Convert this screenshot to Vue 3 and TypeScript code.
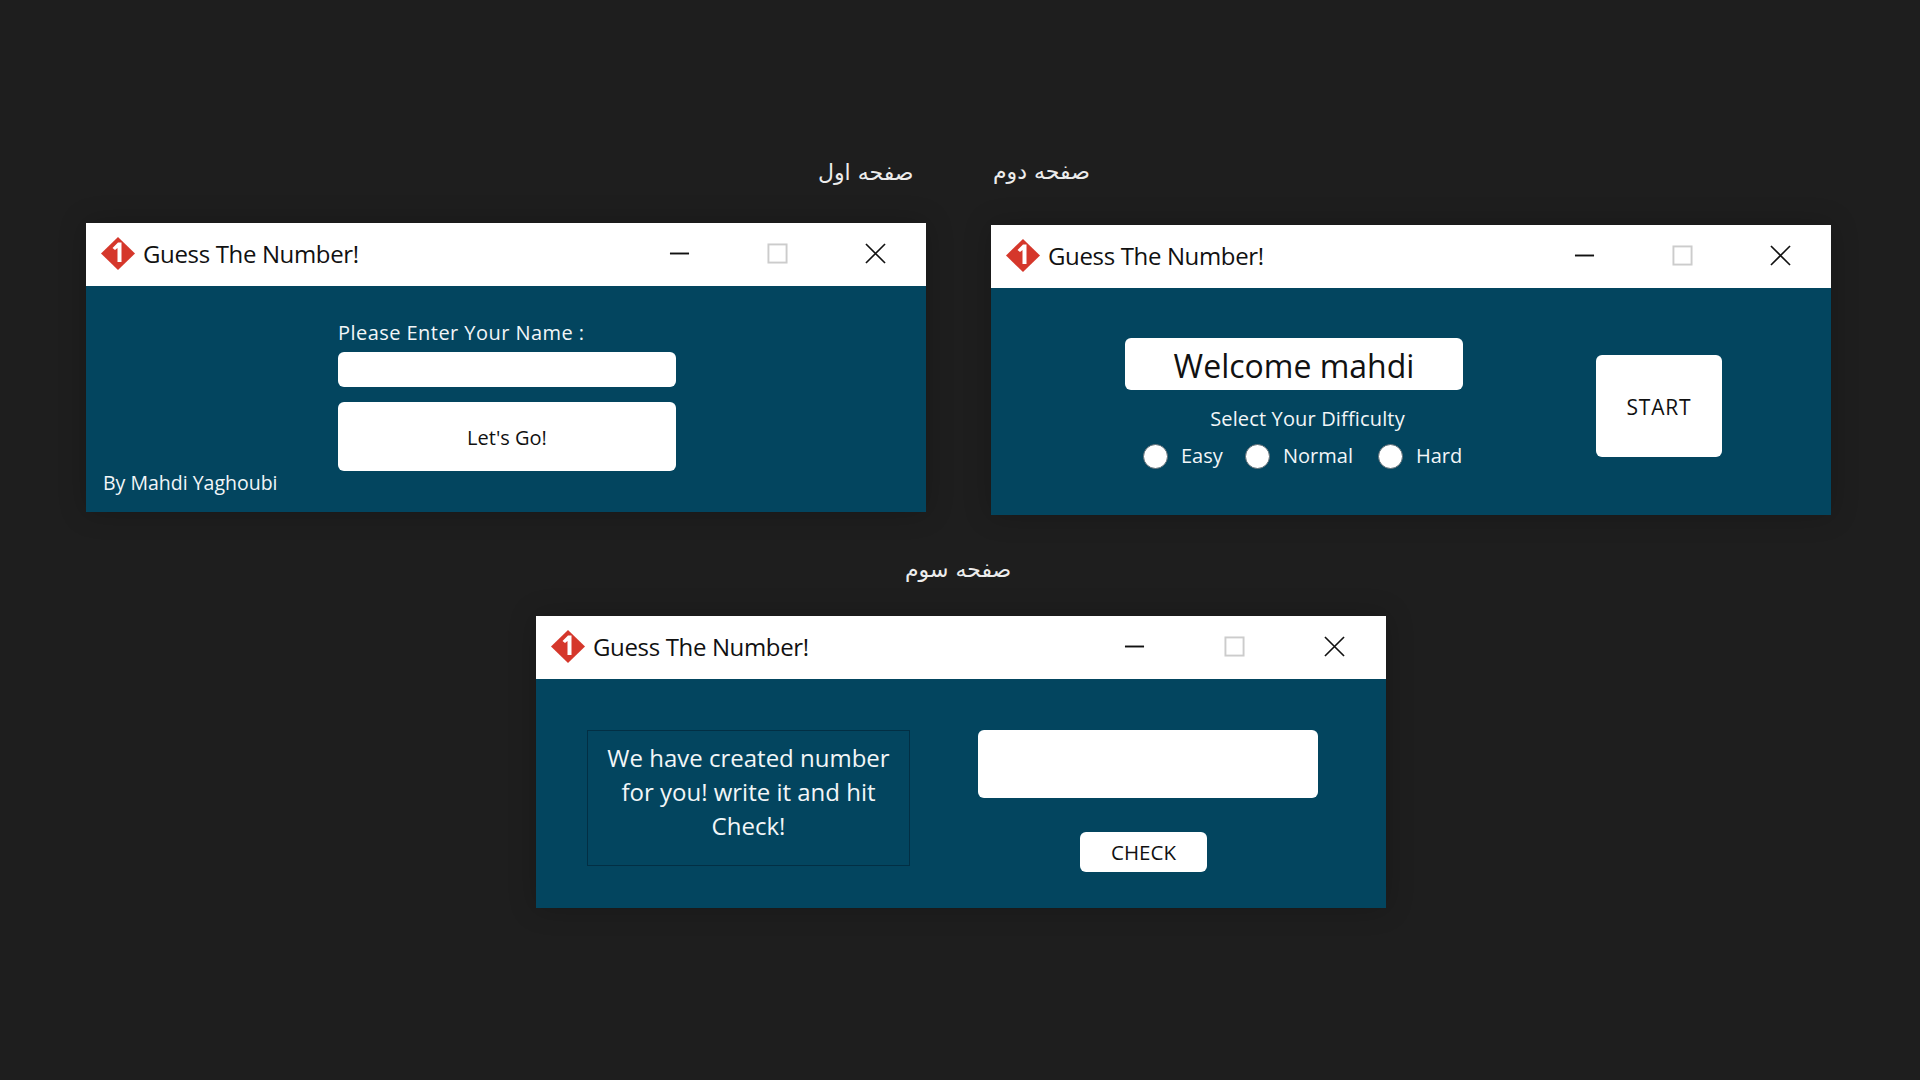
<script setup lang="ts">
import { ref } from "vue"

const windows = [
  { id: "first", caption: "صفحه اول" },
  { id: "second", caption: "صفحه دوم" },
  { id: "third", caption: "صفحه سوم" },
]

const levels = ["Easy", "Normal", "Hard"]
const difficulty = ref("")
</script>

<template>
  <main class="desktop">
    <template v-for="win in windows" :key="win.id">
      <p class="caption" :class="`caption-${win.id}`" dir="rtl">{{ win.caption }}</p>

      <section class="window" :class="`window-${win.id}`">
        <header class="titlebar">
          <svg class="logo" viewBox="0 0 34 33" aria-hidden="true">
            <path d="M17 0 34 16.5 17 33 0 16.5Z" fill="#d5372b" />
            <path d="M11.5 11 17 5.5h3.5V25h-4V11l-2.5 2Z" fill="#fff" />
          </svg>
          <h1 class="title">Guess The Number!</h1>
          <div class="controls">
            <svg class="control" viewBox="0 0 22 22" aria-hidden="true">
              <path d="M1 11h20" stroke="#111" stroke-width="2" />
            </svg>
            <svg class="control" viewBox="0 0 22 22" aria-hidden="true">
              <rect x="1.5" y="1.5" width="19" height="19" fill="none" stroke="#ccc" stroke-width="2" />
            </svg>
            <svg class="control" viewBox="0 0 22 22" aria-hidden="true">
              <path d="M1 1 21 21M21 1 1 21" stroke="#111" stroke-width="1.7" fill="none" />
            </svg>
          </div>
        </header>

        <div v-if="win.id === 'first'" class="body body-first">
          <p class="credit">By Mahdi Yaghoubi</p>
          <form class="name-form" @submit.prevent>
            <label class="label name-label" for="player">Please Enter Your Name :</label>
            <input id="player" class="field field-name" type="text" />
            <button class="action action-go" type="button">Let's Go!</button>
          </form>
        </div>

        <div v-else-if="win.id === 'second'" class="body body-second">
          <div class="setup">
            <div class="welcome">Welcome mahdi</div>
            <p class="label select-label">Select Your Difficulty</p>
            <div class="levels">
              <label v-for="level in levels" :key="level" class="level" :class="`level-${level.toLowerCase()}`">
                <input v-model="difficulty" class="radio" type="radio" name="difficulty" :value="level" />
                <span>{{ level }}</span>
              </label>
            </div>
          </div>
          <button class="action action-start" type="button">START</button>
        </div>

        <div v-else class="body body-third">
          <p class="hint">We have created number for you! write it and hit Check!</p>
          <div class="guess">
            <input class="field field-guess" type="text" />
            <button class="action action-check" type="button">CHECK</button>
          </div>
        </div>
      </section>
    </template>
  </main>
</template>

<style>
body {
  background: #1e1e1e;
}
</style>

<style scoped>
.desktop {
  position: relative;
  width: 1920px;
  height: 1080px;
  overflow: hidden;
  background: #1e1e1e;
  font-family: "Open Sans", "Noto Sans", sans-serif;
}

.caption {
  position: absolute;
  margin: 0;
  color: #ececec;
  font-family: "DejaVu Sans", sans-serif;
  font-size: 22px;
  line-height: 30px;
  white-space: nowrap;
}

.caption-first {
  top: 158px;
  left: 818px;
}

.caption-second {
  top: 157px;
  left: 993px;
}

.caption-third {
  top: 555px;
  left: 905px;
}

.window {
  position: absolute;
  display: flex;
  flex-direction: column;
  box-shadow: 0 0 26px rgba(0, 0, 0, 0.22);
}

.window-first {
  top: 223px;
  left: 86px;
  width: 840px;
  height: 289px;
}

.window-second {
  top: 225px;
  left: 991px;
  width: 840px;
  height: 290px;
}

.window-third {
  top: 616px;
  left: 536px;
  width: 850px;
  height: 292px;
}

.titlebar {
  display: flex;
  flex: none;
  align-items: center;
  height: 63px;
  padding: 0 40px 3px 15px;
  background: #fff;
  box-sizing: border-box;
}

.window-third .titlebar {
  padding-right: 41px;
}

.logo {
  width: 34px;
  height: 33px;
  flex: none;
}

.title {
  margin: 0 0 0 8px;
  color: #111;
  font-size: 24px;
  font-weight: 400;
  letter-spacing: -0.35px;
  white-space: nowrap;
}

.controls {
  display: flex;
  gap: 77px;
  margin-left: auto;
}

.window-third .controls {
  gap: 79px;
}

.control {
  width: 21px;
  height: 21px;
}

.body {
  flex: 1;
  display: flex;
  background: #03455f;
}

.label {
  margin: 0;
  color: #f2f6f8;
  font-size: 20px;
  line-height: 26px;
}

.field {
  display: block;
  border: 0;
  border-radius: 6px;
  background: #fff;
  box-sizing: border-box;
}

.action {
  display: block;
  border: 0;
  border-radius: 6px;
  padding: 0;
  background: #fff;
  color: #111;
  font-family: inherit;
  font-size: 20px;
}

/* first window */
.body-first {
  padding-top: 34px;
}

.credit {
  flex: none;
  align-self: flex-end;
  width: 235px;
  margin: 0 0 16px 17px;
  color: #f2f6f8;
  font-size: 19.5px;
  line-height: 26px;
}

.name-form {
  width: 338px;
}

.name-label {
  letter-spacing: 0.45px;
}

.field-name {
  width: 338px;
  height: 35px;
  margin-top: 6px;
}

.action-go {
  width: 338px;
  height: 69px;
  margin-top: 15px;
  padding-top: 2px;
}

/* second window */
.body-second {
  padding: 50px 0 0 134px;
}

.setup {
  width: 338px;
}

.welcome {
  height: 52px;
  border-radius: 6px;
  background: #fff;
  color: #111;
  font-size: 32px;
  line-height: 56px;
  text-align: center;
}

.select-label {
  margin: 16px 0 0 27px;
  letter-spacing: 0.15px;
  text-align: center;
}

.levels {
  display: flex;
  margin: 11px 0 0 18px;
}

.level {
  display: flex;
  align-items: center;
  gap: 13px;
  color: #f2f6f8;
  font-size: 20px;
  line-height: 26px;
}

.level-easy {
  width: 102px;
}

.level-normal {
  width: 133px;
}

.radio {
  width: 25px;
  height: 25px;
  margin: 0;
  border-radius: 50%;
  border: 1px solid #5d6c74;
  background: #fff;
  box-sizing: border-box;
  appearance: none;
}

.action-start {
  flex: none;
  width: 126px;
  height: 102px;
  margin: 17px 0 0 133px;
  padding-top: 2px;
  font-size: 21px;
  letter-spacing: 0.8px;
}

/* third window */
.body-third {
  padding: 51px 0 0 51px;
}

.hint {
  flex: none;
  width: 323px;
  height: 136px;
  margin: 0;
  padding: 10px 8px 0;
  border: 1px solid #022f44;
  box-sizing: border-box;
  color: #f2f6f8;
  font-size: 24px;
  line-height: 34px;
  text-align: center;
}

.guess {
  margin-left: 68px;
}

.field-guess {
  width: 340px;
  height: 68px;
}

.action-check {
  width: 127px;
  height: 40px;
  margin: 34px 0 0 102px;
  font-size: 20.5px;
}
</style>
